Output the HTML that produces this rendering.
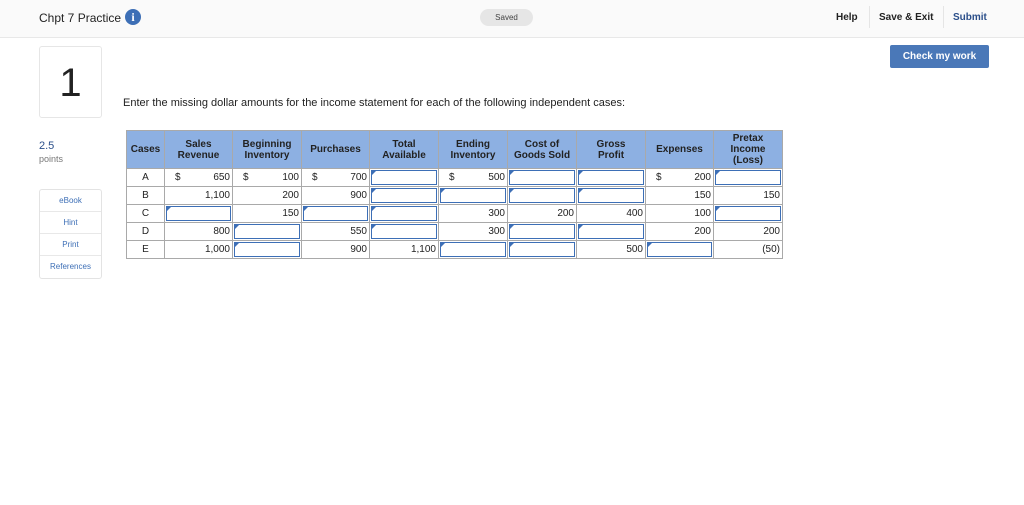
<!DOCTYPE html>
<html><head><style>
*{margin:0;padding:0;box-sizing:border-box}
body{width:1024px;height:505px;background:#fff;font-family:"Liberation Sans",sans-serif;position:relative;overflow:hidden;color:#222}
.top{position:absolute;left:0;top:0;width:1024px;height:38px;background:#fafafa;border-bottom:1px solid #e8e8e8}
.abs{position:absolute}
table{position:absolute;left:126px;top:130px;border-collapse:collapse;table-layout:fixed;font-size:10px}
td,th{border:1px solid #a9a9a9;height:18px;padding:0 2px;text-align:right;position:relative;line-height:16px}
th{background:#8db0e2;font-weight:bold;text-align:center;height:38px;line-height:11px;color:#222}
td.c{text-align:center}
td.in{padding:1px}
td.in div{border:1px solid #3d6fb6;height:15px;background:#fff;position:relative}
td.in div:before{content:"";position:absolute;left:0;top:0;border-left:4px solid #3d6fb6;border-bottom:4px solid transparent}
.d{position:absolute;left:10px}
.side{position:absolute;left:39px;width:63px;border:1px solid #e3e3e3;border-radius:3px;font-size:8px;color:#3d6fb6;text-align:center}
.side div{height:22px;line-height:22px;border-bottom:1px solid #e8e8e8}
</style></head><body>
<div class="top"></div>
<div class="abs" style="left:39px;top:11px;font-size:12px">Chpt 7 Practice</div>
<div class="abs" style="left:125px;top:9px;width:16px;height:16px;border-radius:50%;background:#3d6fb6;color:#fff;font-weight:bold;font-size:12px;text-align:center;line-height:16px;font-family:'Liberation Serif',serif">i</div>
<div class="abs" style="left:480px;top:9px;width:53px;height:17px;border-radius:9px;background:#e6e6e6;font-size:8px;text-align:center;line-height:17px;color:#444">Saved</div>
<div class="abs" style="left:836px;top:12px;font-size:10px;font-weight:bold">Help</div>
<div class="abs" style="left:869px;top:6px;width:1px;height:22px;background:#e5e5e5"></div>
<div class="abs" style="left:879px;top:12px;font-size:10px;font-weight:bold">Save &amp; Exit</div>
<div class="abs" style="left:943px;top:6px;width:1px;height:22px;background:#e5e5e5"></div>
<div class="abs" style="left:953px;top:12px;font-size:10px;font-weight:bold;color:#2b4f8a">Submit</div>
<div class="abs" style="left:890px;top:45px;width:99px;height:23px;background:#4a78b8;border-radius:2px;color:#fff;font-size:10px;font-weight:bold;text-align:center;line-height:23px">Check my work</div>
<div class="abs" style="left:39px;top:46px;width:63px;height:72px;border:1px solid #e6e6e6;border-radius:3px;font-size:40px;text-align:center;line-height:72px">1</div>
<div class="abs" style="left:123px;top:97px;font-size:11px">Enter the missing dollar amounts for the income statement for each of the following independent cases:</div>
<div class="abs" style="left:39px;top:140px;font-size:11px;color:#2b4f8a">2.5</div>
<div class="abs" style="left:39px;top:154px;font-size:9px;color:#777">points</div>
<div class="side" style="top:189px"><div>eBook</div><div>Hint</div><div>Print</div><div style="border:0">References</div></div>
<table>
<colgroup><col style="width:38px"><col style="width:68px"><col style="width:69px"><col style="width:68px"><col style="width:69px"><col style="width:69px"><col style="width:69px"><col style="width:69px"><col style="width:68px"><col style="width:69px"></colgroup>
<tr><th>Cases</th><th>Sales<br>Revenue</th><th>Beginning<br>Inventory</th><th>Purchases</th><th>Total<br>Available</th><th>Ending<br>Inventory</th><th>Cost of<br>Goods Sold</th><th>Gross<br>Profit</th><th>Expenses</th><th>Pretax<br>Income<br>(Loss)</th></tr>
<tr><td class="c">A</td><td><span class="d">$</span>650</td><td><span class="d">$</span>100</td><td><span class="d">$</span>700</td><td class="in"><div></div></td><td><span class="d">$</span>500</td><td class="in"><div></div></td><td class="in"><div></div></td><td><span class="d">$</span>200</td><td class="in"><div></div></td></tr>
<tr><td class="c">B</td><td>1,100</td><td>200</td><td>900</td><td class="in"><div></div></td><td class="in"><div></div></td><td class="in"><div></div></td><td class="in"><div></div></td><td>150</td><td>150</td></tr>
<tr><td class="c">C</td><td class="in"><div></div></td><td>150</td><td class="in"><div></div></td><td class="in"><div></div></td><td>300</td><td>200</td><td>400</td><td>100</td><td class="in"><div></div></td></tr>
<tr><td class="c">D</td><td>800</td><td class="in"><div></div></td><td>550</td><td class="in"><div></div></td><td>300</td><td class="in"><div></div></td><td class="in"><div></div></td><td>200</td><td>200</td></tr>
<tr><td class="c">E</td><td>1,000</td><td class="in"><div></div></td><td>900</td><td>1,100</td><td class="in"><div></div></td><td class="in"><div></div></td><td>500</td><td class="in"><div></div></td><td>(50)</td></tr>
</table>
</body></html>
